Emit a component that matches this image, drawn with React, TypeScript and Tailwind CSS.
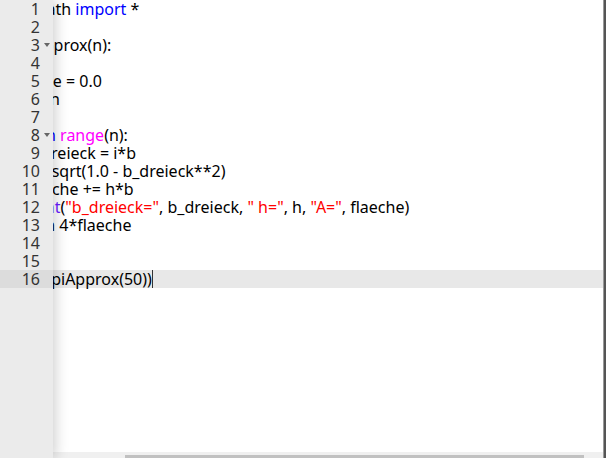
const K = 'text-[#0000ff]';
const F = 'text-[#ff00ff]';
const P = 'text-[#6a1bff]';
const S = 'text-[#ff0000]';

type Seg = [string, string?];

const lines: Seg[][] = [
  [['from math '], ['import', K], [' *']],
  [],
  [['def piApprox(n):']],
  [],
  [['    flaeche = 0.0']],
  [['    b = 1/n']],
  [],
  [['    for i '], ['in', K], [' '], ['range', F], ['(n):']],
  [['        b_dreieck = i*b']],
  [['        h = sqrt(1.0 - b_dreieck**2)']],
  [['        flaeche += h*b']],
  [['        '], ['print', P], ['('], ['"b_dreieck="', S], [', b_dreieck, '], ['" h="', S], [', h, '], ['"A="', S], [', flaeche)']],
  [['    return 4*flaeche']],
  [],
  [],
  [['print(pi-piApprox(50))']],
];

const folds = [3, 8];

export default function App() {
  return (
    <div className="flex w-[606px] h-[458px] overflow-hidden bg-white font-['Liberation_Mono'] text-[16px] leading-[18px] text-black">
      {/* Gutter */}
      <div className="relative z-10 w-[53px] shrink-0 bg-[#ebebeb] text-[#333] shadow-[3px_0_12px_rgba(0,0,0,0.18)]">
        {lines.map((_, i) => (
          <div key={i} className={`flex h-[18px] items-center justify-end ${i === 15 ? 'bg-[#dcdcdc]' : ''}`}>
            <span>{i + 1}</span>
            <span className="flex w-[13px] justify-center">
              {folds.includes(i + 1) && (
                <span className="w-0 h-0 border-l-[3px] border-r-[3px] border-t-[4px] border-l-transparent border-r-transparent border-t-[#666]" />
              )}
            </span>
          </div>
        ))}
      </div>

      {/* Editor + scrollbar */}
      <div className="flex flex-1 flex-col min-w-0">
        <div className="flex-1 overflow-hidden">
          {lines.map((segs, i) => (
            <div key={i} className={`h-[18px] whitespace-pre ${i === 15 ? 'bg-[#e8e8e8]' : ''}`}>
              <div className="-ml-[62px]">
                {segs.map(([t, c], j) => (
                  <span key={j} className={c}>{t}</span>
                ))}
                {i === 15 && <span className="inline-block w-px h-[18px] bg-[#333] align-top" />}
              </div>
            </div>
          ))}
        </div>
        <div className="flex h-[6px] items-end bg-[#f0f0f0] pl-[72px]">
          <div className="h-[3px] w-[459px] bg-[#c1c1c1]" />
        </div>
      </div>

      {/* Right edge */}
      <div className="w-[3px] shrink-0 bg-[#555] border-l border-[#999]" />
    </div>
  );
}
